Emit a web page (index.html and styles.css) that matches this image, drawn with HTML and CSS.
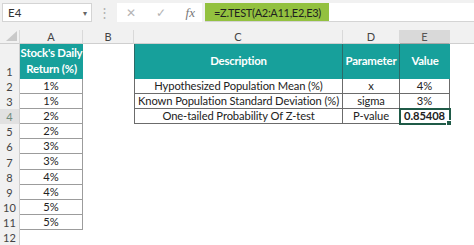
FILE: index.html
```html
<!DOCTYPE html>
<html lang="en">
<head>
  <meta charset="UTF-8">
  <title>Z.TEST example</title>
  <link rel="stylesheet" href="styles.css">
</head>
<body>
  <div class="toolbar">
    <div class="namebox"><span>E4</span><span class="caret">&#9662;</span></div>
    <div class="grip">&#8942;</div>
    <div class="fxbox">
      <span class="cancel">&#10005;</span>
      <span class="enter">&#10003;</span>
      <span class="fx">fx</span>
    </div>
    <div class="formula"><span class="hl">=Z.TEST(A2:A11,E2,E3)</span></div>
  </div>

  <div class="sheet">
    <!-- column headers -->
    <div class="corner"><span class="tri"></span></div>
    <div class="colhead">A</div>
    <div class="colhead">B</div>
    <div class="colhead">C</div>
    <div class="colhead">D</div>
    <div class="colhead active">E</div>
    <div class="colhead last"></div>

    <!-- row 1 -->
    <div class="rowhead bottom">1</div>
    <div class="head">Stock's Daily<br>Return (%)</div>
    <div class="cell"></div>
    <div class="head tbl-first mid">Description</div>
    <div class="head mid">Parameter</div>
    <div class="head">Value</div>
    <div class="cell"></div>

    <!-- row 2 -->
    <div class="rowhead">2</div>
    <div class="val">1%</div>
    <div class="cell"></div>
    <div class="tcell tbl-first">Hypothesized Population Mean (%)</div>
    <div class="tcell">x</div>
    <div class="tcell">4%</div>
    <div class="cell"></div>

    <!-- row 3 -->
    <div class="rowhead">3</div>
    <div class="val">1%</div>
    <div class="cell"></div>
    <div class="tcell tbl-first">Known Population Standard Deviation (%)</div>
    <div class="tcell">sigma</div>
    <div class="tcell">3%</div>
    <div class="cell"></div>

    <!-- row 4 -->
    <div class="rowhead active">4</div>
    <div class="val">2%</div>
    <div class="cell"></div>
    <div class="tcell tbl-first">One-tailed Probability Of Z-test</div>
    <div class="tcell">P-value</div>
    <div class="tcell selected"><b>0.85408</b></div>
    <div class="cell"></div>

    <!-- rows 5 - 11 -->
    <div class="rowhead">5</div>
    <div class="val">2%</div>
    <div class="cell"></div><div class="cell"></div><div class="cell"></div><div class="cell"></div><div class="cell"></div>

    <div class="rowhead">6</div>
    <div class="val">3%</div>
    <div class="cell"></div><div class="cell"></div><div class="cell"></div><div class="cell"></div><div class="cell"></div>

    <div class="rowhead">7</div>
    <div class="val">3%</div>
    <div class="cell"></div><div class="cell"></div><div class="cell"></div><div class="cell"></div><div class="cell"></div>

    <div class="rowhead">8</div>
    <div class="val">4%</div>
    <div class="cell"></div><div class="cell"></div><div class="cell"></div><div class="cell"></div><div class="cell"></div>

    <div class="rowhead">9</div>
    <div class="val">4%</div>
    <div class="cell"></div><div class="cell"></div><div class="cell"></div><div class="cell"></div><div class="cell"></div>

    <div class="rowhead">10</div>
    <div class="val">5%</div>
    <div class="cell"></div><div class="cell"></div><div class="cell"></div><div class="cell"></div><div class="cell"></div>

    <div class="rowhead">11</div>
    <div class="val">5%</div>
    <div class="cell"></div><div class="cell"></div><div class="cell"></div><div class="cell"></div><div class="cell"></div>

    <!-- row 12 -->
    <div class="rowhead">12</div>
    <div class="cell"></div><div class="cell"></div><div class="cell"></div><div class="cell"></div><div class="cell"></div><div class="cell"></div>
  </div>
</body>
</html>
```

FILE: styles.css
```css
* {
  box-sizing: border-box;
}
body {
  margin: 0;
  width: 474px;
  height: 245px;
  overflow: hidden;
  background: #fff;
  font-family: Lato, "Open Sans", sans-serif;
  font-size: 11.2px;
  color: #222;
}

/* formula bar */
.toolbar {
  height: 30px;
  background: #f1f1f1;
  display: flex;
  align-items: flex-start;
  padding: 3px 0 0 2px;
}
.namebox {
  width: 90px;
  height: 19px;
  background: #fff;
  border: 1px solid #d4d4d4;
  display: flex;
  align-items: center;
  justify-content: space-between;
  padding: 0 4px 0 5px;
  font-size: 11.5px;
  color: #333;
}
.caret {
  font-size: 8px;
  color: #666;
}
.grip {
  width: 25px;
  text-align: center;
  color: #b0b0b0;
  font-size: 13px;
  line-height: 19px;
}
.fxbox {
  width: 85px;
  height: 19px;
  background: #fff;
  display: flex;
  align-items: center;
  justify-content: space-between;
  padding: 0 7px 0 9px;
  color: #b4b4b4;
  font-size: 12px;
}
.fxbox .fx {
  font-family: "Liberation Serif", serif;
  font-style: italic;
  font-size: 13px;
  color: #777;
}
.formula {
  flex: 1;
  height: 19px;
  margin-left: 3px;
  background: #fff;
  border-bottom: 1px solid #d4d4d4;
  display: flex;
}
.formula .hl {
  background: #93c13f;
  color: #1f1f1f;
  width: 124px;
  padding-left: 9px;
  line-height: 19px;
  font-size: 11px;
  letter-spacing: -0.3px;
  white-space: nowrap;
}

/* sheet grid */
.sheet {
  display: grid;
  grid-template-columns: 20px 63px 51px 209px 57px 50px 1fr;
  grid-template-rows: 14px 34.5px repeat(10, 15.2px) 1fr;
  height: 215px;
}
.corner,
.colhead {
  background: #f1f1f1;
  border-bottom: 1px solid #cfcfcf;
  border-right: 1px solid #d9d9d9;
  color: #444;
  font-size: 11px;
  line-height: 13px;
  text-align: center;
}
.colhead.last {
  border-right: none;
}
.colhead.active {
  background: #d9d9d9;
  border-bottom: 1px solid #a9a9a9;
  color: #555;
}
.corner {
  position: relative;
}
.tri {
  position: absolute;
  right: 2px;
  bottom: 2px;
  width: 0;
  height: 0;
  border-left: 11px solid transparent;
  border-bottom: 10px solid #c9c9c9;
}
.rowhead {
  background: #f1f1f1;
  border-right: 1px solid #cfcfcf;
  color: #444;
  font-size: 11px;
  display: flex;
  align-items: center;
  justify-content: center;
}
.rowhead.bottom {
  align-items: flex-end;
  padding-bottom: 1px;
}
.rowhead.active {
  background: #e1e1e1;
  color: #6f8c7c;
}

/* column A table */
.head {
  background: #17a09b;
  color: #fff;
  font-weight: bold;
  font-size: 11.4px;
  letter-spacing: -0.2px;
  line-height: 16px;
  white-space: nowrap;
  display: flex;
  align-items: center;
  justify-content: center;
  text-align: center;
}
.head.mid {
  border-right: 1px solid #2b6b68;
}
.val {
  border-right: 1px solid #9c9c9c;
  border-bottom: 1px solid #9c9c9c;
  text-align: center;
  line-height: 14px;
}

/* C..E table */
.tcell {
  border-right: 1px solid #6b6b6b;
  border-bottom: 1px solid #6b6b6b;
  text-align: center;
  line-height: 14px;
  letter-spacing: -0.1px;
  white-space: nowrap;
}
.tbl-first {
  border-left: 1px solid #6b6b6b;
}
.head.tbl-first {
  border-left: 1px solid #2b6b68;
}
.selected {
  position: relative;
  outline: 2px solid #1f5a47;
  outline-offset: -1px;
}
.selected::after {
  content: "";
  position: absolute;
  right: -3px;
  bottom: -3px;
  width: 4px;
  height: 4px;
  background: #1f5a47;
  border: 1px solid #fff;
}
```
